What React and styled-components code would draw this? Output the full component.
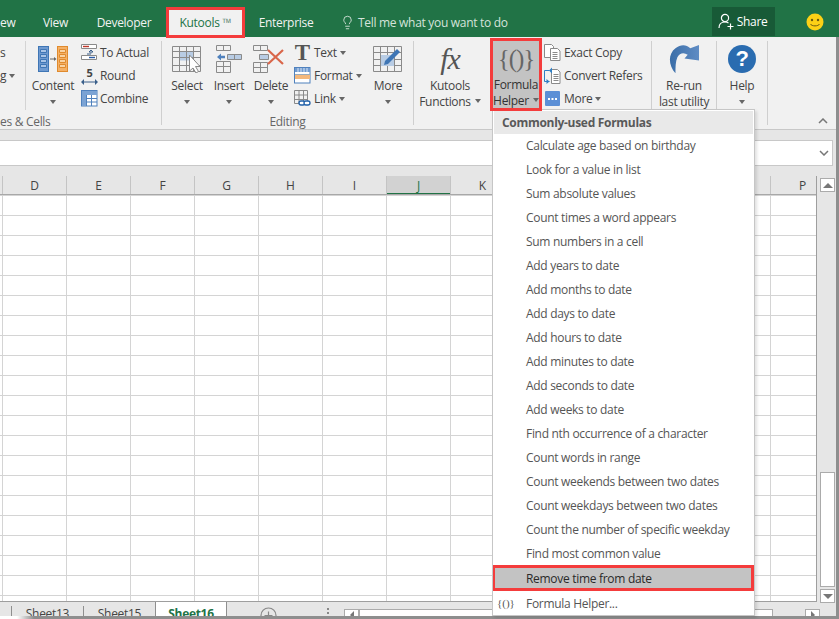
import React from "react";
import styled, { createGlobalStyle } from "styled-components";
import { Lightbulb } from "lucide-react";

const GlobalStyle = createGlobalStyle`
  html, body {
    margin: 0;
    padding: 0;
    background: #fff;
  }
  * {
    box-sizing: border-box;
  }
`;

const UI_FONT = `"Open Sans", "Noto Sans", "Liberation Sans", sans-serif`;
const RED = "#f43c3c";
const GREEN = "#217346";

const Page = styled.div`
  position: relative;
  width: 839px;
  height: 619px;
  overflow: hidden;
  font-family: ${UI_FONT};
  font-size: 12px;
  letter-spacing: -0.3px;
  color: #444;

  &::after {
    content: "";
    position: absolute;
    left: 0;
    bottom: 0;
    width: 34px;
    height: 3px;
    background: linear-gradient(to right, #fff 50%, rgba(255, 255, 255, 0));
  }
`;

const Window = styled.div`
  position: relative;
  display: flex;
  flex-direction: column;
  width: 836px;
  height: 616px;
  background: #e6e6e6;
  box-shadow: 3px 3px 0 #8e8e8e;
`;

/* title bar */
const TitleBar = styled.div`
  display: flex;
  width: 839px;
  height: 37px;
  flex: none;
  padding-top: 7px;
  background: ${GREEN};
  color: #f2f2f2;
`;

const Tab = styled.div`
  display: flex;
  align-items: center;
  justify-content: ${(p) => (p.$cut ? "flex-start" : "center")};
  width: ${(p) => p.$w}px;
  height: 30px;
`;

const ActiveTab = styled(Tab)`
  position: relative;
  z-index: 2;
  height: 31px;
  border: 3px solid ${RED};
  background: #f1f1f1;
  color: ${GREEN};

  sup {
    margin-left: 3px;
    font-size: 12px;
    line-height: 8px;
    color: #6a8f7b;
  }
`;

const TellMe = styled.div`
  display: flex;
  align-items: center;
  gap: 3px;
  height: 30px;
  margin-left: 13px;
  color: #d5e3db;
`;

const ShareButton = styled.div`
  display: flex;
  align-items: center;
  gap: 3px;
  width: 63px;
  height: 29px;
  margin-left: 204px;
  padding-left: 6px;
  background: #185a37;
  color: #fff;
`;

const Smiley = styled.svg`
  width: 18px;
  height: 18px;
  margin: 6px 0 0 31px;
`;

/* ribbon */
const Ribbon = styled.div`
  display: flex;
  flex: none;
  height: 93px;
  padding: 4px 0 4px;
  background: #f1f1f1;
  border-bottom: 1px solid #c8c8c8;
`;

const Group = styled.section`
  position: relative;
  display: flex;
  flex-direction: column;
  flex: none;
  width: ${(p) => p.$w}px;
  border-right: 1px solid #cfcfcf;
`;

const LastGroup = styled(Group)`
  border-right: none;
  flex: 1;
`;

const GroupBody = styled.div`
  display: flex;
  align-items: flex-start;
  flex: 1;
`;

const GroupLabel = styled.div`
  height: 16px;
  line-height: 16px;
  margin-bottom: -5px;
  text-align: ${(p) => p.$align || "center"};
  color: #666;
`;

const BigButton = styled.div`
  display: flex;
  flex-direction: column;
  align-items: center;
  flex: none;
  width: ${(p) => p.$w}px;
  margin-left: ${(p) => p.$ml || 0}px;
`;

const IconSlot = styled.div`
  display: flex;
  align-items: center;
  justify-content: center;
  height: 36px;
`;

const BigLine = styled.div`
  display: flex;
  align-items: center;
  gap: 4px;
  height: 16px;
  white-space: nowrap;
`;

const CaretLine = styled(BigLine)`
  margin-top: 1px;
`;

const Caret = styled.span`
  display: inline-block;
  flex: none;
  width: 0;
  height: 0;
  border-left: 3.5px solid transparent;
  border-right: 3.5px solid transparent;
  border-top: 4px solid #666;
`;

const FormulaButton = styled(BigButton)`
  position: relative;
  z-index: 2;
  height: 73px;
  margin-top: -3px;
  border: 3px solid ${RED};
  background: #c3c3c3;
  color: #333;
`;

const FormulaGlyph = styled.span`
  font-family: "Liberation Serif", serif;
  font-size: 25px;
  letter-spacing: -1px;
  color: #666;
`;

const FxGlyph = styled.span`
  font-family: "Liberation Serif", serif;
  font-style: italic;
  font-size: 30px;
  letter-spacing: -1px;
  color: #555;
`;

const SmallColumn = styled.div`
  display: flex;
  flex-direction: column;
  flex: none;
  width: ${(p) => p.$w}px;
  margin-left: ${(p) => p.$ml || 0}px;
  border-right: ${(p) => (p.$divider ? "1px solid #d4d4d4" : "none")};
  height: ${(p) => (p.$divider ? "69px" : "auto")};
`;

const SmallRow = styled.div`
  display: flex;
  align-items: center;
  gap: ${(p) => p.$gap ?? 3}px;
  height: 23px;
  white-space: nowrap;
`;

const SmallIcon = styled.span`
  display: flex;
  align-items: center;
  justify-content: center;
  flex: none;
  width: 17px;
  height: 18px;
`;

const TextGlyph = styled(SmallIcon)`
  font-family: "Liberation Serif", serif;
  font-weight: 700;
  font-size: 23px;
  letter-spacing: 0;
  color: #555;
`;

const RoundGlyph = styled(SmallIcon)`
  position: relative;
  align-items: flex-start;
  font-size: 11px;
  font-weight: 700;
  line-height: 12px;
  color: #444;
`;

const RoundArrows = styled.svg`
  position: absolute;
  left: 0;
  bottom: 0;
  width: 17px;
  height: 7px;
`;

const CollapseChevron = styled.svg`
  position: absolute;
  right: 8px;
  bottom: 1px;
  width: 10px;
  height: 6px;
`;

const HelpFace = styled.div`
  display: flex;
  align-items: center;
  justify-content: center;
  width: 28px;
  height: 28px;
  border-radius: 50%;
  background: #2a6cb0;
  color: #fff;
  font-family: "Liberation Sans", sans-serif;
  font-weight: 700;
  font-size: 22px;
`;

/* formula bar */
const FormulaBand = styled.div`
  flex: none;
  height: 46px;
  padding: 10px 3px 10px 0;
`;

const FormulaInput = styled.div`
  display: flex;
  align-items: center;
  justify-content: flex-end;
  height: 26px;
  padding-right: 3px;
  background: #fff;
  border: 1px solid #c8c8c8;
  border-left: none;
`;

/* sheet */
const SheetArea = styled.div`
  display: flex;
  flex: 1;
  min-height: 0;
`;

const GridPane = styled.div`
  display: flex;
  flex-direction: column;
  width: 817px;
  border-right: 1px solid #9e9e9e;
  border-bottom: 1px solid #9e9e9e;
`;

const ColumnHeader = styled.div`
  display: flex;
  flex: none;
  height: 19px;
  padding-left: 2px;
  overflow: hidden;
  border-bottom: 1px solid #a8a8a8;
`;

const ColumnCell = styled.div`
  flex: none;
  width: 64px;
  height: 19px;
  line-height: 19px;
  text-align: center;
  border-left: 1px solid #c4c4c4;
  letter-spacing: 0;
  background: ${(p) => (p.$selected ? "#d2d2d2" : "transparent")};
  color: ${(p) => (p.$selected ? GREEN : "#444")};
  box-shadow: ${(p) => (p.$selected ? `inset 0 -2px 0 ${GREEN}` : "none")};
`;

const Cells = styled.div`
  flex: 1;
  background-color: #fff;
  background-image: linear-gradient(to right, #d4d4d4 1px, transparent 1px),
    linear-gradient(to bottom, #d4d4d4 1px, transparent 1px);
  background-size: 64px 20px;
  background-position: 2px 0;
`;

const VScroll = styled.div`
  display: flex;
  flex-direction: column;
  flex: 1;
  padding: 2px 1px 0 3px;
`;

const ScrollButton = styled.div`
  display: flex;
  align-items: center;
  justify-content: center;
  flex: none;
  width: ${(p) => p.$w || 15}px;
  height: ${(p) => p.$h || 14}px;
  background: #fff;
  border: 1px solid #ababab;
`;

const VThumb = styled.div`
  flex: none;
  width: 15px;
  height: 115px;
  margin: 280px 0 2px;
  background: #fff;
  border: 1px solid #ababab;
`;

const ArrowUp = styled.span`
  width: 0;
  height: 0;
  border-left: 5px solid transparent;
  border-right: 5px solid transparent;
  border-bottom: 5px solid #777;
`;

const ArrowDown = styled(ArrowUp)`
  border-bottom: none;
  border-top: 5px solid #777;
`;

const ArrowSide = styled.span`
  width: 0;
  height: 0;
  border-top: 4px solid transparent;
  border-bottom: 4px solid transparent;
  border-${(p) => (p.$left ? "right" : "left")}: 4px solid #777;
`;

/* sheet tabs */
const SheetBar = styled.div`
  display: flex;
  flex: none;
  height: 14px;
  padding-left: 11px;
  overflow: hidden;
`;

const SheetTab = styled.div`
  flex: none;
  width: 72px;
  height: 16px;
  margin-top: 4px;
  line-height: 16px;
  text-align: center;
  border-left: 1px solid #8f8f8f;
`;

const ActiveSheetTab = styled.div`
  flex: none;
  width: 72px;
  height: 22px;
  margin-top: -1px;
  padding-top: 5px;
  line-height: 16px;
  text-align: center;
  font-weight: 700;
  color: ${GREEN};
  background: #fff;
  border-left: 1px solid #8f8f8f;
  border-right: 1px solid #8f8f8f;
`;

const AddSheet = styled.svg`
  flex: none;
  width: 17px;
  height: 17px;
  margin: 5px 0 0 33px;
`;

const SplitDots = styled.div`
  flex: none;
  width: 2px;
  height: 8px;
  margin: 6px 0 0 50px;
  background-image: linear-gradient(to bottom, #888 2px, transparent 2px);
  background-size: 2px 4px;
`;

const HScroll = styled.div`
  display: flex;
  flex: none;
  width: 475px;
  height: 14px;
  margin-left: 15px;
  padding-top: 7px;
`;

const HThumb = styled.div`
  flex: none;
  width: 414px;
  height: 12px;
  background: #fff;
  border: 1px solid #ababab;
`;

const HEnd = styled(ScrollButton)`
  margin-left: 32px;
`;

/* dropdown menu */
const Menu = styled.div`
  position: absolute;
  z-index: 1;
  left: 492px;
  top: 109px;
  display: flex;
  flex-direction: column;
  width: 263px;
  height: 507px;
  overflow: hidden;
  padding: 1px;
  background: #fff;
  border: 1px solid #c6c6c6;
  box-shadow: 2px 2px 3px rgba(0, 0, 0, 0.12);
`;

const MenuHeader = styled.div`
  flex: none;
  height: 23px;
  line-height: 24px;
  padding-left: 8px;
  font-weight: 700;
  background: #e9e9e9;
  color: #595959;
`;

const MenuItem = styled.div`
  display: flex;
  align-items: center;
  flex: none;
  height: 24px;
  padding-left: ${(p) => (p.$withIcon ? 3 : 32)}px;
  padding-bottom: ${(p) => (p.$withIcon ? 0 : 1)}px;
  padding-top: ${(p) => (p.$withIcon ? 2 : 0)}px;
  color: #555;
`;

const ActiveMenuItem = styled(MenuItem)`
  height: 26px;
  margin: -1px -1px;
  padding: 0 0 0 31px;
  background: #c3c3c3;
  color: #2a2a2a;
  border: 3px solid ${RED};
  border-left-width: 2px;
`;

const MenuIcon = styled.span`
  width: 29px;
  font-family: "Liberation Serif", serif;
  font-size: 11px;
  letter-spacing: 0;
  color: #555;
`;

/* icons */
const G = "#8a8a8a";
const B = "#4f81bd";
const LB = "#b8cce4";

const SelectIcon = () => (
  <svg width="30" height="27" viewBox="0 0 30 27" fill="none">
    <rect x="7.5" y="5.5" width="14" height="9" fill={LB} />
    <path d="M.5.5h28v25H.5zM.5 5.5h28M.5 11.5h28M.5 19.5h28M7.5.5v25M14.5.5v25M21.5.5v25" stroke={G} />
    <path d="M17.5 9v16l3.5-3 3 5 2.5-1.5-3-5h4.5z" fill="#fff" stroke="#888" />
  </svg>
);

const InsertIcon = () => (
  <svg width="27" height="28" viewBox="0 0 27 28" fill="none">
    <path d="M.5.5h14v5H.5zM7.5.5v5M.5 16.5h14v11H.5zM.5 21.5h14M7.5 16.5v11" stroke={G} />
    <path d="M11.5 9.5h14v5h-14zM18.5 9.5v5" stroke={G} fill={LB} />
    <path d="M1 12l4-3.5v2.2h4v2.6H5v2.2z" fill={B} />
  </svg>
);

const DeleteIcon = () => (
  <svg width="36" height="28" viewBox="0 0 36 28" fill="none">
    <path d="M.5.5h14v5H.5zM7.5.5v5M.5 17.5h14v10H.5zM.5 22.5h14M7.5 17.5v10" stroke={G} />
    <path d="M6.5 9.5h9v5h-9z" stroke={G} fill={LB} />
    <path d="M15 5l15 14M30 5L15 19" stroke="#d9664a" strokeWidth="2.2" />
  </svg>
);

const MoreIcon = () => (
  <svg width="30" height="27" viewBox="0 0 30 27" fill="none">
    <path d="M.5.5h28v25H.5zM.5 6.5h28M.5 13.5h28M.5 19.5h28M7.5.5v25M14.5.5v25M21.5.5v25" stroke={G} />
    <rect x="8" y="9" width="13" height="11" fill={LB} />
    <path d="M11 19l1-4L24 3l3 3-12 12z" fill="#3f76b5" />
  </svg>
);

const ContentIcon = () => (
  <svg width="30" height="27" viewBox="0 0 30 27" fill="none">
    <rect x=".5" y=".5" width="10" height="25" fill="#6f9ad0" stroke="#3f76b5" />
    <path d="M2.5 3.5h6v3h-6zM2.5 8.500h6v3h-6zM2.5 13.500h6v3h-6zM2.5 18.500h6v3h-6z" fill="#a9c4e6" stroke="#3f76b5" />
    <rect x="19.5" y=".5" width="10" height="25" fill="#f4b167" stroke="#e08a2d" />
    <path d="M21.5 3.5h6v3h-6zM21.5 8.500h6v3h-6zM21.5 13.500h6v3h-6zM21.5 18.500h6v3h-6z" fill="#f9d3a3" stroke="#e08a2d" />
    <path d="M12 13h5" stroke="#666" />
    <path d="M16 11l2.5 2-2.5 2z" fill="#666" />
  </svg>
);

const ToActualIcon = () => (
  <svg width="17" height="17" viewBox="0 0 17 17" fill="none">
    <path d="M.5.5h15v4H.5zM.5 11.500h15v4H.5z" stroke={G} fill="#fff" />
    <path d="M2 2.5h6" stroke="#c0392b" strokeWidth="1.4" />
    <path d="M8 13.500h6" stroke="#2a5da8" strokeWidth="1.4" />
    <path d="M10 9.500v-1M10 6l-2 2h4zM6 10h4" stroke="#3a5f8a" />
  </svg>
);

const CombineIcon = () => (
  <svg width="17" height="17" viewBox="0 0 17 17" fill="none">
    <rect x=".5" y=".5" width="15.5" height="15.5" fill="#fff" stroke={B} />
    <rect x="1" y="1" width="15" height="4" fill="#7ba3d4" />
    <rect x="1" y="1" width="4.5" height="15" fill="#7ba3d4" />
    <path d="M5.500 5v11M10.500 5v11M5.500 8.500H16M5.500 12H16" stroke={B} />
  </svg>
);

const FormatIcon = () => (
  <svg width="17" height="17" viewBox="0 0 17 17" fill="none">
    <rect x=".5" y=".5" width="15.5" height="15.5" fill="#fff" stroke={B} />
    <rect x="1" y="1" width="15" height="4" fill="#6f9ad0" />
    <rect x="1" y="8" width="15" height="4" fill="#f3b87c" />
    <path d="M4 1v4M7 1v4M10 1v4M13 1v4" stroke="#dbe6f4" />
    <path d="M1 7.500h15" stroke="#9ab" />
  </svg>
);

const LinkIcon = () => (
  <svg width="17" height="17" viewBox="0 0 17 17" fill="none">
    <path d="M.5.5h13v13H.5zM.5 5h13M.5 9.500h13M5 .5v13M9.500.5v13" stroke={G} />
    <rect x="5" y="11" width="6" height="4" rx="2" fill="#fff" stroke="#1f5fa8" strokeWidth="1.3" />
    <rect x="10" y="11" width="6" height="4" rx="2" fill="#fff" stroke="#1f5fa8" strokeWidth="1.3" />
  </svg>
);

const CopyIcon = () => (
  <svg width="17" height="17" viewBox="0 0 17 17" fill="none">
    <path d="M.5.5h7l2 2v11h-9z" fill="#fff" stroke={G} />
    <path d="M6.500 4.500h7l2.500 2.500v9.500h-9.500z" fill="#fff" stroke={G} />
    <path d="M8.500 8.500h5M8.500 10.500h5M8.500 12.500h5M8.500 14.500h5" stroke={G} />
  </svg>
);

const ConvertIcon = () => (
  <svg width="17" height="17" viewBox="0 0 17 17" fill="none">
    <path d="M7.500 2.500h6l2.500 2.500v11.500h-8.500z" fill="#fff" stroke={G} />
    <path d="M9.500 7.500h5M9.500 9.500h5M9.500 11.500h5M9.500 13.500h5" stroke={G} />
    <path d="M.5 3.500h5M.5 3.500v11h5" stroke="#2f7fc4" />
    <path d="M8 .5L5 3.500l3 3zM2.500 12l3 2.500-3 2.500" fill="#2f7fc4" />
  </svg>
);

const DotsIcon = () => (
  <svg width="15" height="15" viewBox="0 0 15 15">
    <rect width="15" height="15" rx="1" fill="#5b8fd6" />
    <path d="M3 7h2v2H3zM6.500 7h2v2h-2zM10 7h2v2h-2z" fill="#fff" />
  </svg>
);

const RerunIcon = () => (
  <svg width="33" height="30" viewBox="50 25 100 93">
    <defs>
      <linearGradient id="rerun" x1="0" y1="0" x2="1" y2="0">
        <stop offset="0" stopColor="#3b6ea8" />
        <stop offset="1" stopColor="#5f8cc4" />
      </linearGradient>
    </defs>
    <path
      d="M72 116C50 92 48 56 72 38c16-12 33-12 46 0l27-10v48l-45-6 10-12c-12-8-25-6-32 8-6 14-6 32-6 50z"
      fill="url(#rerun)"
    />
  </svg>
);

// the menu hides the letters of L to O, so those header cells stay empty
const columns = ["D", "E", "F", "G", "H", "I", "J", "K", "", "", "", "", "P"];

const menuItems = [
  "Calculate age based on birthday",
  "Look for a value in list",
  "Sum absolute values",
  "Count times a word appears",
  "Sum numbers in a cell",
  "Add years to date",
  "Add months to date",
  "Add days to date",
  "Add hours to date",
  "Add minutes to date",
  "Add seconds to date",
  "Add weeks to date",
  "Find nth occurrence of a character",
  "Count words in range",
  "Count weekends between two dates",
  "Count weekdays between two dates",
  "Count the number of specific weekday",
  "Find most common value",
];

const App = () => {
  return (
    <>
      <GlobalStyle />
      <Page>
        <Window>
          <TitleBar>
            <Tab $w={29} $cut>ew</Tab>
            <Tab $w={53}>View</Tab>
            <Tab $w={84}>Developer</Tab>
            <ActiveTab $w={79}>
              Kutools<sup>™</sup>
            </ActiveTab>
            <Tab $w={82}>Enterprise</Tab>
            <TellMe>
              <Lightbulb size={15} strokeWidth={1.3} color="#e8efe9" />
              Tell me what you want to do
            </TellMe>
            <ShareButton>
              <svg width="16" height="17" viewBox="0 0 16 17" fill="none" stroke="#fff" strokeWidth="1.2">
                <circle cx="7" cy="5" r="3.6" />
                <path d="M1 15c0-4 2.500-6 6-6 1.500 0 2.500.3 3.500 1M12.500 10.500v6M9.500 13.500h6" />
              </svg>
              Share
            </ShareButton>
            <Smiley viewBox="0 0 18 18">
              <circle cx="9" cy="9" r="8.500" fill="#fcd116" />
              <circle cx="6" cy="7" r="1.200" fill="#6b5a10" />
              <circle cx="12" cy="7" r="1.200" fill="#6b5a10" />
              <path d="M4.500 11c1 2.500 8 2.500 9 0" fill="none" stroke="#6b5a10" />
            </Smiley>
          </TitleBar>

          <Ribbon>
            <Group $w={162}>
              <GroupBody>
                <SmallColumn $w={26} $divider>
                  <SmallRow>s</SmallRow>
                  <SmallRow $gap={3}>g <Caret /></SmallRow>
                </SmallColumn>
                <BigButton $w={46} $ml={4}>
                  <IconSlot><ContentIcon /></IconSlot>
                  <BigLine>Content</BigLine>
                  <CaretLine><Caret /></CaretLine>
                </BigButton>
                <SmallColumn $w={70} $ml={5}>
                  <SmallRow $gap={2}><SmallIcon><ToActualIcon /></SmallIcon>To Actual</SmallRow>
                  <SmallRow $gap={2}>
                    <RoundGlyph>
                      5
                      <RoundArrows viewBox="0 0 17 7">
                        <path d="M1 4h15" stroke="#3a5f8a" />
                        <path d="M0 4l3-3v6zM17 4l-3-3v6z" fill="#3a5f8a" />
                      </RoundArrows>
                    </RoundGlyph>
                    Round
                  </SmallRow>
                  <SmallRow $gap={2}><SmallIcon><CombineIcon /></SmallIcon>Combine</SmallRow>
                </SmallColumn>
              </GroupBody>
              <GroupLabel $align="left">es &amp; Cells</GroupLabel>
            </Group>

            <Group $w={252}>
              <GroupBody>
                <BigButton $w={40} $ml={5}>
                  <IconSlot><SelectIcon /></IconSlot>
                  <BigLine>Select</BigLine>
                  <CaretLine><Caret /></CaretLine>
                </BigButton>
                <BigButton $w={40} $ml={2}>
                  <IconSlot><InsertIcon /></IconSlot>
                  <BigLine>Insert</BigLine>
                  <CaretLine><Caret /></CaretLine>
                </BigButton>
                <BigButton $w={40} $ml={2}>
                  <IconSlot><DeleteIcon /></IconSlot>
                  <BigLine>Delete</BigLine>
                  <CaretLine><Caret /></CaretLine>
                </BigButton>
                <SmallColumn $w={70} $ml={3}>
                  <SmallRow><TextGlyph>T</TextGlyph>Text <Caret /></SmallRow>
                  <SmallRow><SmallIcon><FormatIcon /></SmallIcon>Format <Caret /></SmallRow>
                  <SmallRow><SmallIcon><LinkIcon /></SmallIcon>Link <Caret /></SmallRow>
                </SmallColumn>
                <BigButton $w={40} $ml={4}>
                  <IconSlot><MoreIcon /></IconSlot>
                  <BigLine>More</BigLine>
                  <CaretLine><Caret /></CaretLine>
                </BigButton>
              </GroupBody>
              <GroupLabel>Editing</GroupLabel>
            </Group>

            <Group $w={238}>
              <GroupBody>
                <BigButton $w={72}>
                  <IconSlot><FxGlyph>fx</FxGlyph></IconSlot>
                  <BigLine>Kutools</BigLine>
                  <BigLine>Functions <Caret /></BigLine>
                </BigButton>
                <FormulaButton $w={52} $ml={4}>
                  <IconSlot><FormulaGlyph>{"{()}"}</FormulaGlyph></IconSlot>
                  <BigLine>Formula</BigLine>
                  <BigLine>Helper <Caret /></BigLine>
                </FormulaButton>
                <SmallColumn $w={106} $ml={2}>
                  <SmallRow><SmallIcon><CopyIcon /></SmallIcon>Exact Copy</SmallRow>
                  <SmallRow><SmallIcon><ConvertIcon /></SmallIcon>Convert Refers</SmallRow>
                  <SmallRow><SmallIcon><DotsIcon /></SmallIcon>More <Caret /></SmallRow>
                </SmallColumn>
              </GroupBody>
            </Group>

            <Group $w={65}>
              <GroupBody>
                <BigButton $w={64}>
                  <IconSlot><RerunIcon /></IconSlot>
                  <BigLine>Re-run</BigLine>
                  <BigLine>last utility</BigLine>
                </BigButton>
              </GroupBody>
            </Group>

            <Group $w={51}>
              <GroupBody>
                <BigButton $w={50}>
                  <IconSlot><HelpFace>?</HelpFace></IconSlot>
                  <BigLine>Help</BigLine>
                  <CaretLine><Caret /></CaretLine>
                </BigButton>
              </GroupBody>
            </Group>

            <LastGroup $w={68}>
              <CollapseChevron viewBox="0 0 10 6">
                <path d="M1 5l4-4 4 4" fill="none" stroke="#777" strokeWidth="1.500" />
              </CollapseChevron>
            </LastGroup>
          </Ribbon>

          <FormulaBand>
            <FormulaInput>
              <svg width="10" height="6" viewBox="0 0 10 6">
                <path d="M1 1l4 4 4-4" fill="none" stroke="#777" strokeWidth="1.500" />
              </svg>
            </FormulaInput>
          </FormulaBand>

          <SheetArea>
            <GridPane>
              <ColumnHeader>
                {columns.map((col, i) => (
                  <ColumnCell key={i} $selected={col === "J"}>{col}</ColumnCell>
                ))}
              </ColumnHeader>
              <Cells />
            </GridPane>
            <VScroll>
              <ScrollButton><ArrowUp /></ScrollButton>
              <VThumb />
              <ScrollButton><ArrowDown /></ScrollButton>
            </VScroll>
          </SheetArea>

          <SheetBar>
            <SheetTab>Sheet13</SheetTab>
            <SheetTab>Sheet15</SheetTab>
            <ActiveSheetTab>Sheet16</ActiveSheetTab>
            <AddSheet viewBox="0 0 17 17">
              <circle cx="8.500" cy="8.500" r="7.500" fill="none" stroke="#888" strokeWidth="1.200" />
              <path d="M8.500 4.500v8M4.500 8.500h8" stroke="#888" strokeWidth="1.200" />
            </AddSheet>
            <SplitDots />
            <HScroll>
              <ScrollButton $h={12}><ArrowSide $left /></ScrollButton>
              <HThumb />
              <HEnd $h={12}><ArrowSide /></HEnd>
            </HScroll>
          </SheetBar>

          <Menu>
            <MenuHeader>Commonly-used Formulas</MenuHeader>
            {menuItems.map((label) => (
              <MenuItem key={label}>{label}</MenuItem>
            ))}
            <ActiveMenuItem>Remove time from date</ActiveMenuItem>
            <MenuItem $withIcon>
              <MenuIcon>{"{()}"}</MenuIcon>
              Formula Helper...
            </MenuItem>
          </Menu>
        </Window>
      </Page>
    </>
  );
};

export default App;
